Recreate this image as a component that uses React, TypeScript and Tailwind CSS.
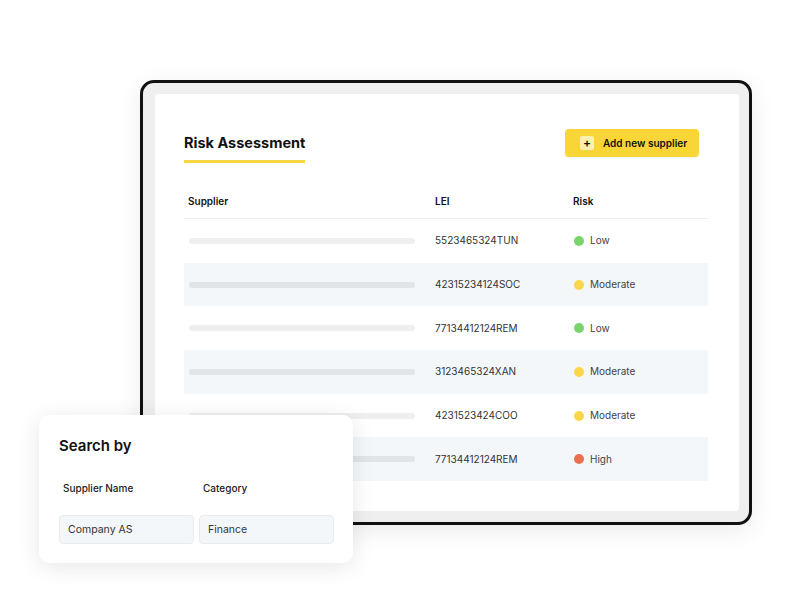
import React from 'react';

type Risk = 'Low' | 'Moderate' | 'High';

interface Row {
  lei: string;
  risk: Risk;
}

const rows: Row[] = [
  { lei: '5523465324TUN', risk: 'Low' },
  { lei: '42315234124SOC', risk: 'Moderate' },
  { lei: '77134412124REM', risk: 'Low' },
  { lei: '3123465324XAN', risk: 'Moderate' },
  { lei: '4231523424COO', risk: 'Moderate' },
  { lei: '77134412124REM', risk: 'High' },
];

const dotColor: Record<Risk, string> = {
  Low: 'bg-[#79d56b]',
  Moderate: 'bg-[#f9d748]',
  High: 'bg-[#ee6e50]',
};

const SearchCard: React.FC = () => (
  <div className="absolute left-[39px] top-[415px] w-[314px] rounded-[10px] bg-white px-5 pt-[21px] pb-[19px] shadow-[0_4px_22px_rgba(0,0,0,0.10)]">
    <h2 className="text-[15px] font-semibold leading-5 text-[#111]">Search by</h2>
    <div className="mt-[24px] grid grid-cols-[135px_135px] gap-x-[5px]">
      <span className="pl-1 text-[10px] font-medium leading-4 text-[#222]">Supplier Name</span>
      <span className="pl-1 text-[10px] font-medium leading-4 text-[#222]">Category</span>
      <div className="mt-[19px] flex h-[29px] items-center rounded-[4px] border border-[#e6ecef] bg-[#f3f7f9] pl-[8px] text-[10.5px] text-[#333]">
        Company AS
      </div>
      <div className="mt-[19px] flex h-[29px] items-center rounded-[4px] border border-[#e6ecef] bg-[#f3f7f9] pl-[8px] text-[10.5px] text-[#333]">
        Finance
      </div>
    </div>
  </div>
);

export default function App() {
  return (
    <div className="relative h-[589px] w-[810px] overflow-hidden bg-white font-['Inter',sans-serif]">
      <div className="ml-[140px] mt-[80px] h-[445px] w-[612px] rounded-[14px] border-[3px] border-[#111] bg-[#efefef] pl-3 pt-[11px] pr-[10px] pb-[11px] shadow-[0_6px_24px_rgba(0,0,0,0.08)]">
        <div className="h-full w-full rounded-[3px] bg-white pl-[29px] pr-[31px] pt-[35px]">
          <div className="flex items-start justify-between">
            <div className="pt-[4px]">
              <h1 className="text-[14.5px] font-bold leading-5 text-[#111]">Risk Assessment</h1>
              <div className="mt-[7px] h-[3px] w-[121px] bg-[#f8d543]" />
            </div>
            <button className="mr-[9px] flex h-[28px] w-[134px] items-center gap-[9px] rounded-[4px] bg-[#fad536] pl-[15px] shadow-[0_1px_2px_rgba(0,0,0,0.06)]">
              <span className="flex h-[14px] w-[14px] items-center justify-center rounded-[2px] bg-[#fdefae] text-[12px] font-semibold leading-none text-[#111]">
                +
              </span>
              <span className="text-[10px] font-semibold text-[#111]">Add new supplier</span>
            </button>
          </div>

          <div className="mt-[22px] grid h-[34px] grid-cols-[247px_138px_1fr] items-center border-b border-[#ececec] text-[10px] font-semibold text-[#111]">
            <span className="pl-1">Supplier</span>
            <span className="pl-1">LEI</span>
            <span className="pl-1">Risk</span>
          </div>

          {rows.map((r, i) => {
            const shaded = i % 2 === 1;
            return (
              <div
                key={i}
                className={`grid h-[43.7px] grid-cols-[247px_138px_1fr] items-center text-[10px] text-[#333] ${shaded ? 'bg-[#f3f7f9]' : 'bg-white'}`}
              >
                <div className="pl-[5px]">
                  <div className={`h-[6px] w-[226px] rounded-full ${shaded ? 'bg-[#e2e5e8]' : 'bg-[#efefef]'}`} />
                </div>
                <span className="pl-1">{r.lei}</span>
                <div className="flex items-center gap-[6px] pl-[5px]">
                  <span className={`h-[10px] w-[10px] rounded-full ${dotColor[r.risk]}`} />
                  <span className="text-[#444]">{r.risk}</span>
                </div>
              </div>
            );
          })}
        </div>
      </div>

      <SearchCard />
    </div>
  );
}
